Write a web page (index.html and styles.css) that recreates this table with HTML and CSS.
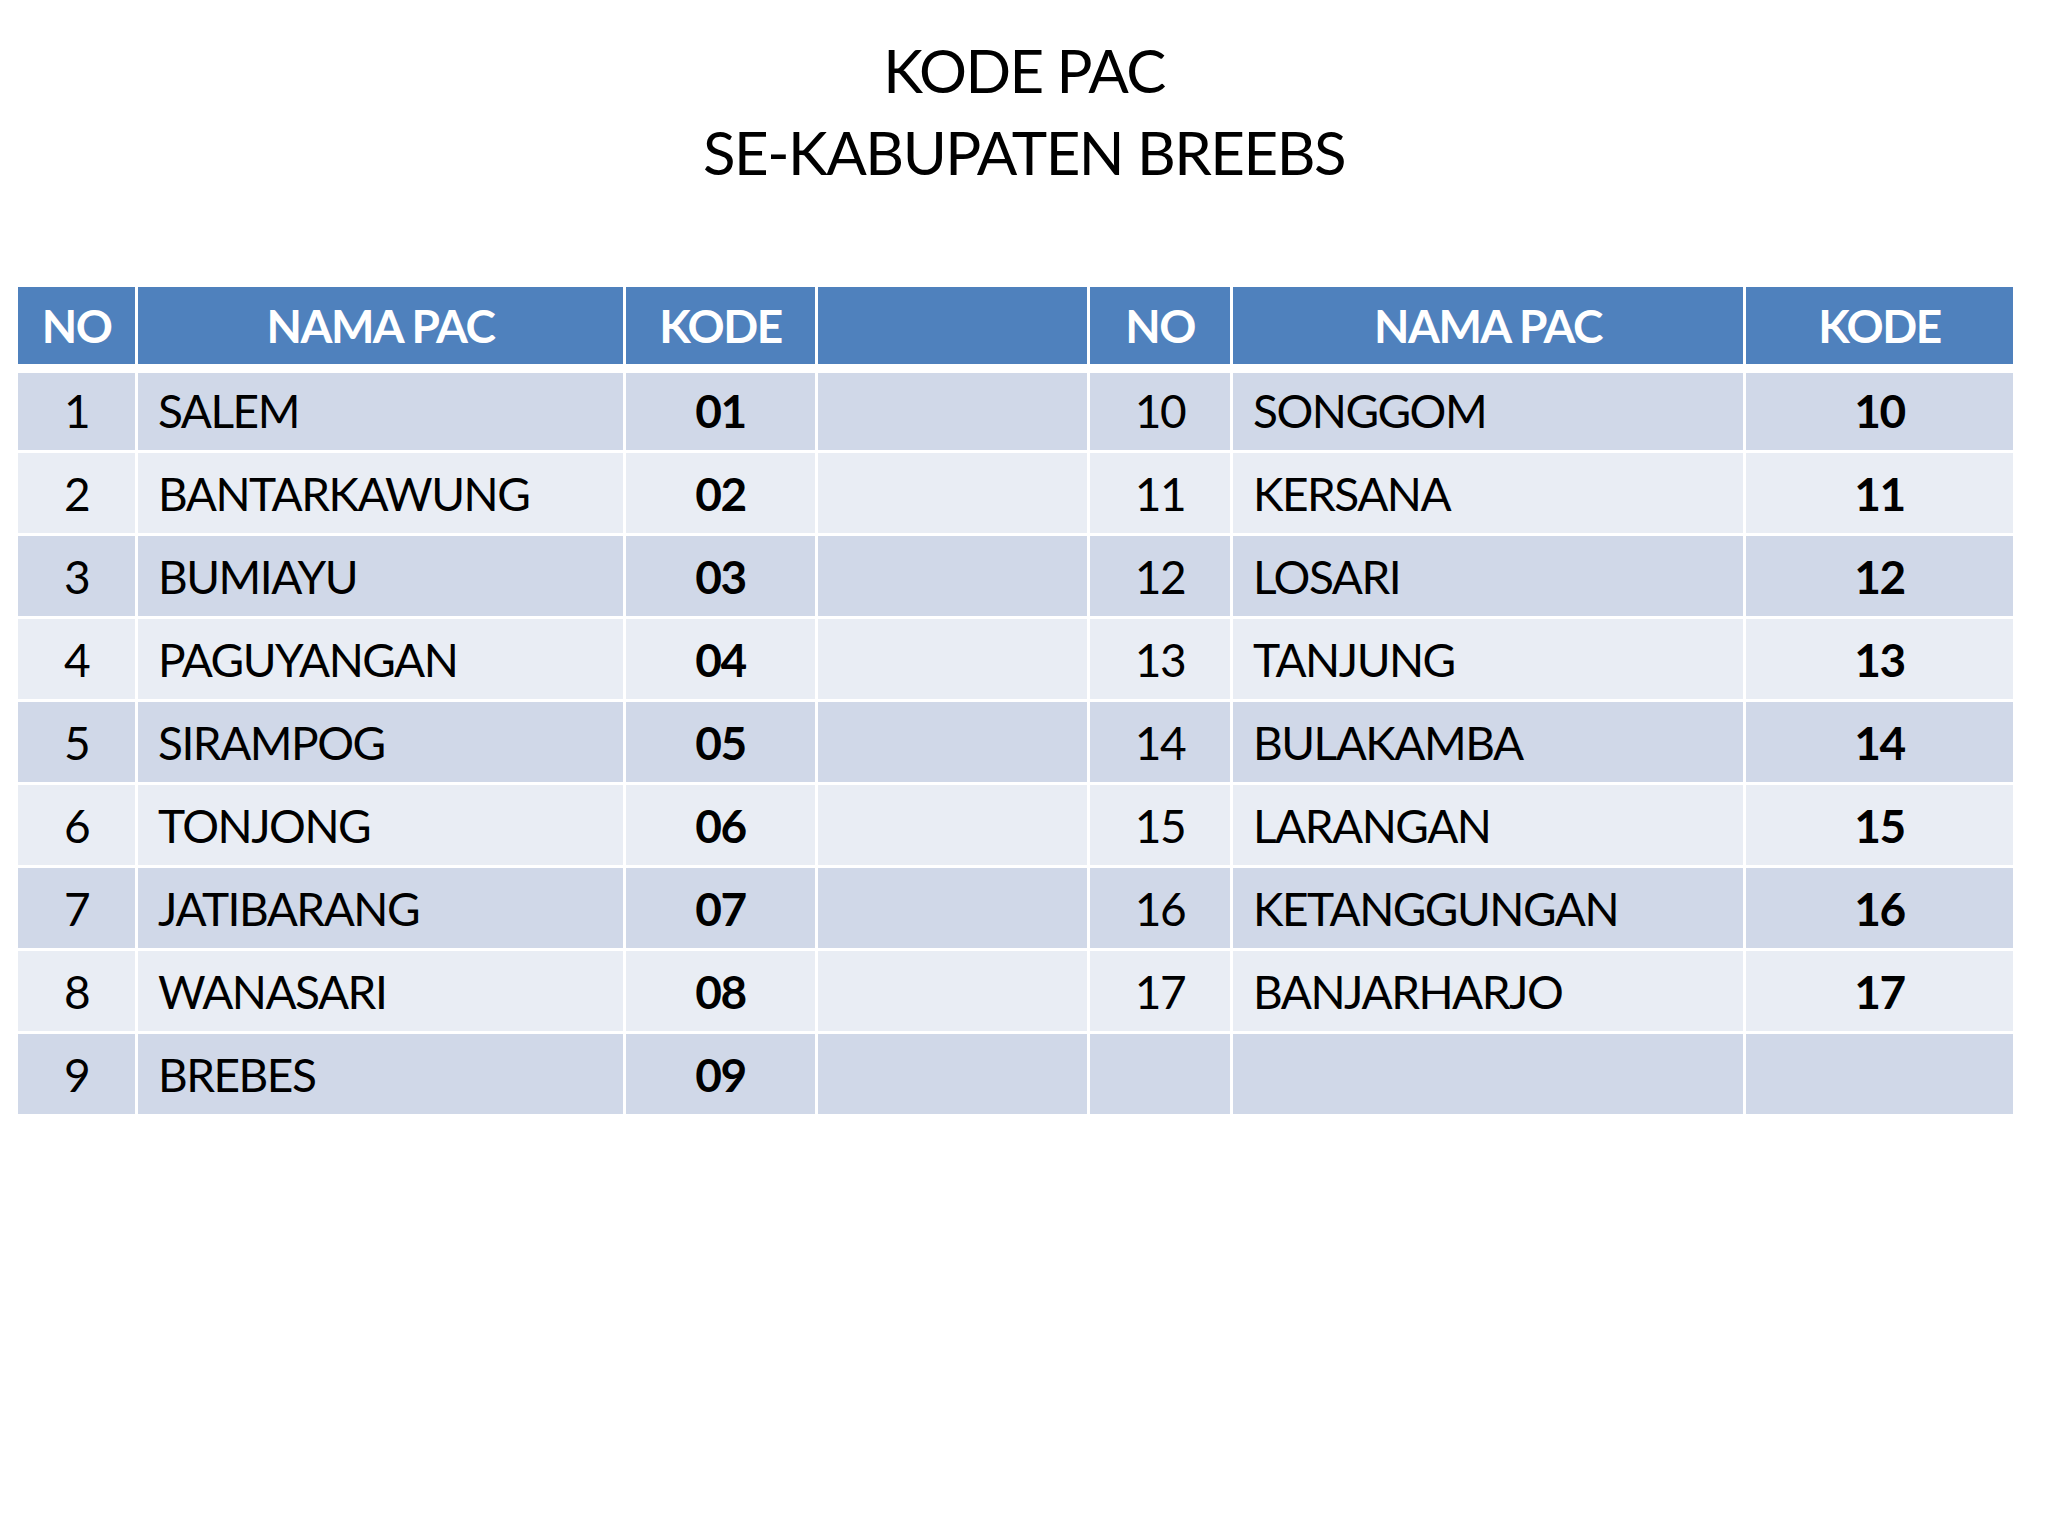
FILE: index.html
```html
<!DOCTYPE html>
<html lang="id">
<head>
<meta charset="utf-8">
<title>KODE PAC SE-KABUPATEN BREEBS</title>
<link rel="stylesheet" href="styles.css">
</head>
<body>
<div class="slide">
  <h1 class="title">KODE PAC<br>SE-KABUPATEN BREEBS</h1>
  <div class="table">
    <div class="row head">
      <div class="c">NO</div><div class="c">NAMA PAC</div><div class="c">KODE</div><div class="c"></div>
      <div class="c">NO</div><div class="c">NAMA PAC</div><div class="c">KODE</div>
    </div>
    <div class="row odd first">
      <div class="c">1</div><div class="c name">SALEM</div><div class="c code">01</div><div class="c"></div>
      <div class="c">10</div><div class="c name">SONGGOM</div><div class="c code">10</div>
    </div>
    <div class="row even">
      <div class="c">2</div><div class="c name">BANTARKAWUNG</div><div class="c code">02</div><div class="c"></div>
      <div class="c">11</div><div class="c name">KERSANA</div><div class="c code">11</div>
    </div>
    <div class="row odd">
      <div class="c">3</div><div class="c name">BUMIAYU</div><div class="c code">03</div><div class="c"></div>
      <div class="c">12</div><div class="c name">LOSARI</div><div class="c code">12</div>
    </div>
    <div class="row even">
      <div class="c">4</div><div class="c name">PAGUYANGAN</div><div class="c code">04</div><div class="c"></div>
      <div class="c">13</div><div class="c name">TANJUNG</div><div class="c code">13</div>
    </div>
    <div class="row odd">
      <div class="c">5</div><div class="c name">SIRAMPOG</div><div class="c code">05</div><div class="c"></div>
      <div class="c">14</div><div class="c name">BULAKAMBA</div><div class="c code">14</div>
    </div>
    <div class="row even">
      <div class="c">6</div><div class="c name">TONJONG</div><div class="c code">06</div><div class="c"></div>
      <div class="c">15</div><div class="c name">LARANGAN</div><div class="c code">15</div>
    </div>
    <div class="row odd">
      <div class="c">7</div><div class="c name">JATIBARANG</div><div class="c code">07</div><div class="c"></div>
      <div class="c">16</div><div class="c name">KETANGGUNGAN</div><div class="c code">16</div>
    </div>
    <div class="row even">
      <div class="c">8</div><div class="c name">WANASARI</div><div class="c code">08</div><div class="c"></div>
      <div class="c">17</div><div class="c name">BANJARHARJO</div><div class="c code">17</div>
    </div>
    <div class="row odd">
      <div class="c">9</div><div class="c name">BREBES</div><div class="c code">09</div><div class="c"></div>
      <div class="c"></div><div class="c name"></div><div class="c code"></div>
    </div>
  </div>
</div>
</body>
</html>
```
FILE: styles.css
```css
html, body {
  margin: 0;
  padding: 0;
  background: #ffffff;
}
.slide {
  width: 2048px;
  height: 1536px;
  font-family: Lato, "Open Sans", sans-serif;
  color: #000;
}
.title {
  margin: 0;
  padding-top: 29px;
  font-size: 60px;
  line-height: 82px;
  letter-spacing: -1.5px;
  font-weight: 400;
  text-align: center;
}
.table {
  margin: 94px 0 0 18px;
  width: 1995px;
  display: flex;
  flex-direction: column;
  gap: 3px;
}
.row {
  display: grid;
  grid-template-columns: 117px 485px 189px 269px 140px 510px 267px;
  column-gap: 3px;
  height: 80px;
}
.row .c {
  display: flex;
  align-items: center;
  justify-content: center;
  font-size: 46px;
  letter-spacing: -1.5px;
}
.row .name {
  justify-content: flex-start;
  padding-left: 20px;
}
.row .code {
  font-weight: 700;
}
.head {
  height: 77px;
  margin-bottom: 6px;
}
.head .c {
  background: #4f81bd;
  color: #fff;
  font-weight: 700;
}
.first {
  height: 77px;
}
.first .c {
  padding-bottom: 3px;
  box-sizing: border-box;
}
.odd .c {
  background: #d0d8e8;
}
.even .c {
  background: #e9edf4;
}
```
